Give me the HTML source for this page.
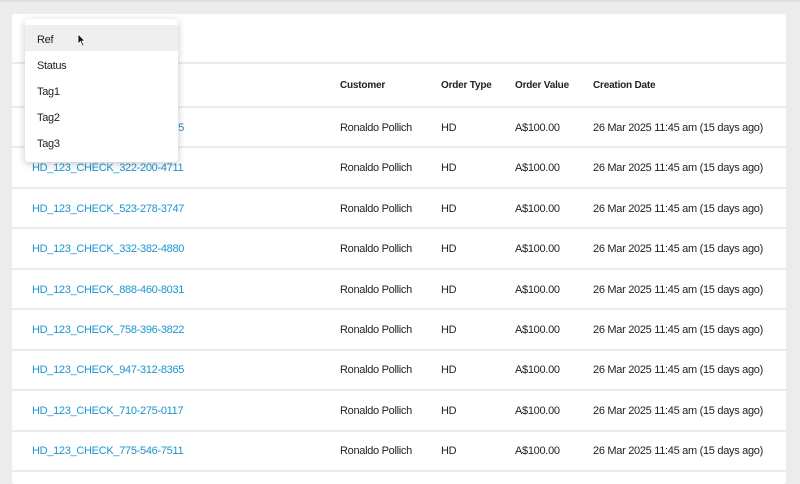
<!DOCTYPE html>
<html><head><style>
*{margin:0;padding:0;box-sizing:border-box}
body{width:800px;height:474px;background:#ececec;font-family:"Liberation Sans",sans-serif;font-size:11px;color:#222;position:relative;overflow:hidden;letter-spacing:-0.3px}
.top{position:absolute;left:0;top:0;width:800px;height:2px;background:#e0e0e0}
.card{position:absolute;left:12px;top:14px;width:774px;height:470px;background:#fff;border-radius:3px}
.hl{position:absolute;left:12px;width:774px;height:2px;background:#ebebeb}
.t{position:absolute;white-space:nowrap;line-height:14px}
.h{font-weight:bold;font-size:10px;letter-spacing:-0.2px}
.a{color:#1a95d0}
.dd{position:absolute;left:25px;top:19px;width:153px;height:143px;background:#fff;border-radius:4px;box-shadow:0 2px 8px rgba(0,0,0,.22)}
.dd .hi{position:absolute;left:0;top:6px;width:153px;height:26px;background:#efefef}
.dd .i{position:absolute;left:12px;line-height:14px;font-size:11px;color:#222}
</style></head><body>
<div class="top"></div>
<div class="card"></div>
<div class="hl" style="top:62px"></div>
<div class="hl" style="top:106px"></div>
<div class="hl" style="top:146px"></div>
<div class="hl" style="top:187px"></div>
<div class="hl" style="top:227px"></div>
<div class="hl" style="top:268px"></div>
<div class="hl" style="top:308px"></div>
<div class="hl" style="top:349px"></div>
<div class="hl" style="top:389px"></div>
<div class="hl" style="top:430px"></div>
<div class="hl" style="top:470px"></div>

<div class="t h" style="left:340px;top:79px">Customer</div>
<div class="t h" style="left:441px;top:79px">Order Type</div>
<div class="t h" style="left:515px;top:79px">Order Value</div>
<div class="t h" style="left:593px;top:79px">Creation Date</div>

<div class="t a" style="left:32px;top:121px">HD_123_CHECK_000-000-0005</div>
<div class="t" style="left:340px;top:121px">Ronaldo Pollich</div><div class="t" style="left:441px;top:121px">HD</div><div class="t" style="left:515px;top:121px">A$100.00</div><div class="t" style="left:593px;top:121px">26 Mar 2025 11:45 am (15 days ago)</div>

<div class="t a" style="left:32px;top:161px">HD_123_CHECK_322-200-4711</div>
<div class="t" style="left:340px;top:161px">Ronaldo Pollich</div><div class="t" style="left:441px;top:161px">HD</div><div class="t" style="left:515px;top:161px">A$100.00</div><div class="t" style="left:593px;top:161px">26 Mar 2025 11:45 am (15 days ago)</div>

<div class="t a" style="left:32px;top:202px">HD_123_CHECK_523-278-3747</div>
<div class="t" style="left:340px;top:202px">Ronaldo Pollich</div><div class="t" style="left:441px;top:202px">HD</div><div class="t" style="left:515px;top:202px">A$100.00</div><div class="t" style="left:593px;top:202px">26 Mar 2025 11:45 am (15 days ago)</div>

<div class="t a" style="left:32px;top:242px">HD_123_CHECK_332-382-4880</div>
<div class="t" style="left:340px;top:242px">Ronaldo Pollich</div><div class="t" style="left:441px;top:242px">HD</div><div class="t" style="left:515px;top:242px">A$100.00</div><div class="t" style="left:593px;top:242px">26 Mar 2025 11:45 am (15 days ago)</div>

<div class="t a" style="left:32px;top:283px">HD_123_CHECK_888-460-8031</div>
<div class="t" style="left:340px;top:283px">Ronaldo Pollich</div><div class="t" style="left:441px;top:283px">HD</div><div class="t" style="left:515px;top:283px">A$100.00</div><div class="t" style="left:593px;top:283px">26 Mar 2025 11:45 am (15 days ago)</div>

<div class="t a" style="left:32px;top:323px">HD_123_CHECK_758-396-3822</div>
<div class="t" style="left:340px;top:323px">Ronaldo Pollich</div><div class="t" style="left:441px;top:323px">HD</div><div class="t" style="left:515px;top:323px">A$100.00</div><div class="t" style="left:593px;top:323px">26 Mar 2025 11:45 am (15 days ago)</div>

<div class="t a" style="left:32px;top:363px">HD_123_CHECK_947-312-8365</div>
<div class="t" style="left:340px;top:363px">Ronaldo Pollich</div><div class="t" style="left:441px;top:363px">HD</div><div class="t" style="left:515px;top:363px">A$100.00</div><div class="t" style="left:593px;top:363px">26 Mar 2025 11:45 am (15 days ago)</div>

<div class="t a" style="left:32px;top:404px">HD_123_CHECK_710-275-0117</div>
<div class="t" style="left:340px;top:404px">Ronaldo Pollich</div><div class="t" style="left:441px;top:404px">HD</div><div class="t" style="left:515px;top:404px">A$100.00</div><div class="t" style="left:593px;top:404px">26 Mar 2025 11:45 am (15 days ago)</div>

<div class="t a" style="left:32px;top:444px">HD_123_CHECK_775-546-7511</div>
<div class="t" style="left:340px;top:444px">Ronaldo Pollich</div><div class="t" style="left:441px;top:444px">HD</div><div class="t" style="left:515px;top:444px">A$100.00</div><div class="t" style="left:593px;top:444px">26 Mar 2025 11:45 am (15 days ago)</div>

<div class="dd">
<div class="hi"></div>
<div class="i" style="top:14px">Ref</div>
<div class="i" style="top:40px">Status</div>
<div class="i" style="top:66px">Tag1</div>
<div class="i" style="top:92px">Tag2</div>
<div class="i" style="top:118px">Tag3</div>
<svg style="position:absolute;left:52px;top:14px" width="9" height="14" viewBox="0 0 9 14"><path d="M1 1 L1 11 L3.5 8.5 L5.5 13 L7 12.3 L5 8 L8 8 Z" fill="#111" stroke="#fff" stroke-width="0.8"/></svg>
</div>
</body></html>
